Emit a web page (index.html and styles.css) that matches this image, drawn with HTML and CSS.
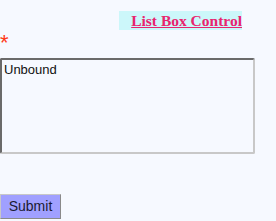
FILE: index.html
```html
<!DOCTYPE html>
<html lang="en">
<head>
    <meta charset="UTF-8">
    <title>List Box Control</title>
    <link rel="stylesheet" href="styles.css">
</head>
<body>
    <!-- heading -->
    <div class="title-row">
        <span class="title">List Box Control</span>
    </div>

    <!-- required marker -->
    <div class="required">*</div>

    <!-- list box -->
    <select class="list-box" size="6">
        <option>Unbound</option>
    </select>

    <div class="actions">
        <button type="button" class="submit-btn">Submit</button>
    </div>
</body>
</html>
```

FILE: styles.css
```css
body {
    margin: 0;
    background: #f6f9ff;
    font-family: Arial, 'Liberation Sans', sans-serif;
    color: #000;
}
.title-row {
    display: flex;
    justify-content: flex-end;
    padding: 11px 34px 0 0;
}
.title {
    background: #ccf7fa;
    padding: 0 0 0 12px;
    font-family: 'Liberation Serif', 'Times New Roman', serif;
    font-weight: bold;
    font-size: 15.5px;
    line-height: 19px;
    color: #e8246e;
    text-decoration: underline;
}
.required {
    color: #ff3a1a;
    font-size: 22px;
    line-height: 20px;
    height: 22px;
    margin-top: 3px;
}
.list-box {
    display: block;
    margin: 3px 0 0;
    width: 255px;
    height: 96px;
    background: #f6f9ff;
    border: 2px solid #c8c8c8;
    border-top-color: #6a6a6a;
    border-left-color: #6a6a6a;
    font-family: Arial, 'Liberation Sans', sans-serif;
    font-size: 13px;
    color: #111;
    padding: 0;
    outline: none;
}
.list-box option {
    padding: 2px 2px 0;
}
.actions {
    margin-top: 40px;
}
.submit-btn {
    display: block;
    background: #a0a0ff;
    border: 1px solid #8a8a8a;
    border-top-color: #c8c8c8;
    border-left-color: #c8c8c8;
    font-family: Arial, 'Liberation Sans', sans-serif;
    font-size: 14px;
    line-height: 15px;
    padding: 4px 4px;
    width: 61px;
    height: 25px;
    color: #1a1a33;
}
```
